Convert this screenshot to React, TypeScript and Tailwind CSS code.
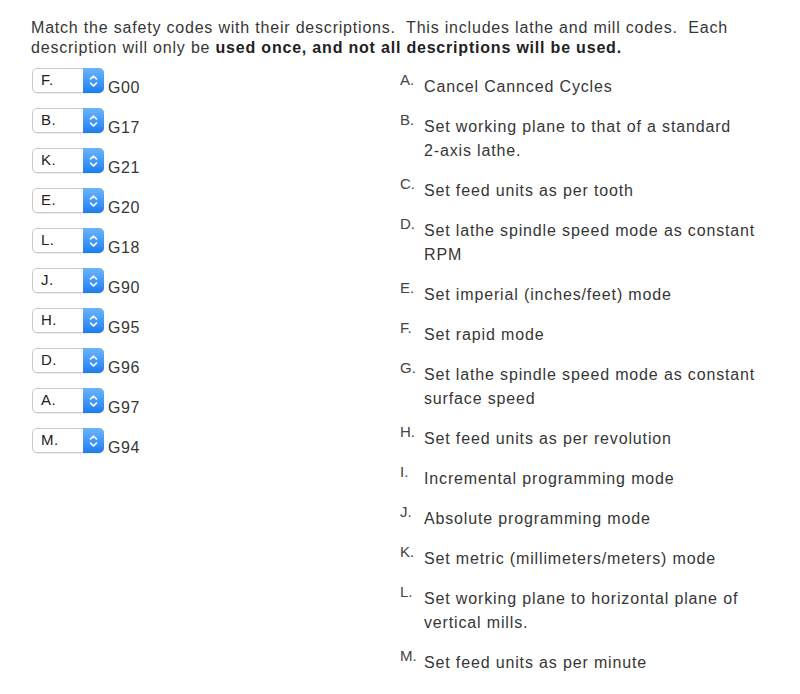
import React from "react";

const picks: [string, string][] = [
  ["F.", "G00"],
  ["B.", "G17"],
  ["K.", "G21"],
  ["E.", "G20"],
  ["L.", "G18"],
  ["J.", "G90"],
  ["H.", "G95"],
  ["D.", "G96"],
  ["A.", "G97"],
  ["M.", "G94"],
];

// each description is given as its displayed lines
const descriptions: [string, string[]][] = [
  ["A.", ["Cancel Cannced Cycles"]],
  ["B.", ["Set working plane to that of a standard", "2-axis lathe."]],
  ["C.", ["Set feed units as per tooth"]],
  ["D.", ["Set lathe spindle speed mode as constant", "RPM"]],
  ["E.", ["Set imperial (inches/feet) mode"]],
  ["F.", ["Set rapid mode"]],
  ["G.", ["Set lathe spindle speed mode as constant", "surface speed"]],
  ["H.", ["Set feed units as per revolution"]],
  ["I.", ["Incremental programming mode"]],
  ["J.", ["Absolute programming mode"]],
  ["K.", ["Set metric (millimeters/meters) mode"]],
  ["L.", ["Set working plane to horizontal plane of", "vertical mills."]],
  ["M.", ["Set feed units as per minute"]],
];

function Stepper() {
  return (
    <svg width="9" height="14" viewBox="0 0 9 14" fill="none" aria-hidden="true">
      <path d="M1.5 5 L4.5 2 L7.5 5" stroke="white" strokeWidth="1.6" strokeLinecap="round" strokeLinejoin="round" />
      <path d="M1.5 9 L4.5 12 L7.5 9" stroke="white" strokeWidth="1.6" strokeLinecap="round" strokeLinejoin="round" />
    </svg>
  );
}

function SelectBox({ value }: { value: string }) {
  return (
    <div className="flex h-[25px] w-[72px] rounded-[5px] border border-[#c9c9c9] bg-white shadow-[0_1px_1px_rgba(0,0,0,0.08)]">
      <div className="flex flex-1 items-center pl-[8px] text-[15px] tracking-[0.5px] text-[#222]">{value}</div>
      <div className="-my-px -mr-px flex w-[21px] items-center justify-center rounded-r-[5px] bg-gradient-to-b from-[#6ab4fb] to-[#1b7cf0]">
        <Stepper />
      </div>
    </div>
  );
}

export default function App() {
  return (
    <div className="min-h-[694px] w-[800px] bg-white pl-[31px] pt-[18px] font-['Liberation_Sans',Arial,sans-serif] text-[#363636]">
      {/* Question text */}
      <p className="text-[16px] leading-[20px] tracking-[0.8px]">
        Match the safety codes with their descriptions.{"\u00a0 "}This includes lathe and mill codes.{"\u00a0 "}Each
        <br />
        description will only be <b className="font-bold text-[#222]">used once, and not all descriptions will be used.</b>
      </p>

      <div className="flex">
        {/* Code pickers */}
        <div className="flex w-[369px] flex-col gap-[15px] pl-px pt-[10px]">
          {picks.map(([value, code]) => (
            <div key={code} className="flex items-end gap-[4px]">
              <SelectBox value={value} />
              <span className="relative top-[3px] text-[16px] leading-none tracking-[0.6px]">{code}</span>
            </div>
          ))}
        </div>

        {/* Descriptions */}
        <div className="flex flex-col gap-[16px] pt-[17px]">
          {descriptions.map(([letter, lines]) => (
            <div key={letter} className="flex">
              <span className="relative -top-[7px] w-[24px] shrink-0 text-[15px] leading-[24px] text-[#444]">{letter}</span>
              <div className="flex flex-col whitespace-nowrap text-[16px] leading-[24px] tracking-[0.85px]">
                {lines.map((line) => (
                  <span key={line}>{line}</span>
                ))}
              </div>
            </div>
          ))}
        </div>
      </div>
    </div>
  );
}
